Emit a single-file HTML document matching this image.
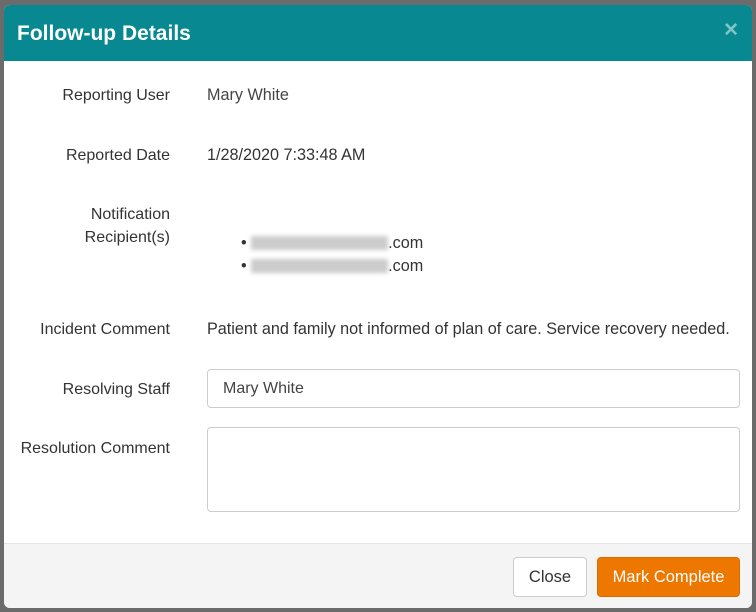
<!DOCTYPE html>
<html><head><style>
body{margin:0;width:756px;height:612px;background:#6b6b6b;font-family:"Liberation Sans",sans-serif;position:relative;overflow:hidden}
.m{position:absolute;left:4px;top:5px;width:748px;height:603px;background:#fff;border-radius:6px;overflow:hidden}
.h{height:56px;background:#088890;color:#fff;position:relative}
.h h1{margin:0;position:absolute;left:13px;top:17px;font-size:21px;font-weight:bold}
.x{position:absolute;right:13px;top:14px;color:#7fc6c9;font-size:19px;font-weight:bold}
.l{position:absolute;right:582px;text-align:right;font-size:16px;color:#333;line-height:23px}
.v{position:absolute;left:203px;font-size:16.2px;color:#333;line-height:23px}
.in{position:absolute;left:203px;width:533px;border:1px solid #ccc;border-radius:4px;box-sizing:border-box;font-size:16px;color:#444;padding-left:15px}
.f{position:absolute;left:0;top:538px;width:100%;height:65px;background:#f4f4f4;border-top:1px solid #e5e5e5}
.b{position:absolute;top:13px;height:40px;border-radius:4px;box-sizing:border-box;font-size:16.5px;line-height:38px;text-align:center}
.blur{display:inline-block;width:137px;height:14px;background:#ccc;filter:blur(2px);vertical-align:-2px}
</style></head><body>
<div class="m">
<div class="h"><h1>Follow-up Details</h1><div class="x">✕</div></div>
<div class="l" style="top:79px">Reporting User</div><div class="v" style="top:79px;color:#444">Mary White</div>
<div class="l" style="top:139px">Reported Date</div><div class="v" style="top:139px">1/28/2020 7:33:48 AM</div>
<div class="l" style="top:198px">Notification<br>Recipient(s)</div>
<div class="v" style="top:227px;left:237px">• <span class="blur"></span>.com<br>• <span class="blur"></span>.com</div>
<div class="l" style="top:313px">Incident Comment</div><div class="v" style="top:313px">Patient and family not informed of plan of care. Service recovery needed.</div>
<div class="l" style="top:373px">Resolving Staff</div>
<div class="in" style="top:364px;height:39px;line-height:37px">Mary White</div>
<div class="l" style="top:432px">Resolution Comment</div>
<div class="in" style="top:422px;height:85px"></div>
<div class="f">
<div class="b" style="left:509px;width:74px;background:#fff;border:1px solid #ccc;color:#333">Close</div>
<div class="b" style="left:593px;width:143px;background:#ee7700;border:1px solid #d96c00;color:#fff">Mark Complete</div>
</div>
</div>
</body></html>
